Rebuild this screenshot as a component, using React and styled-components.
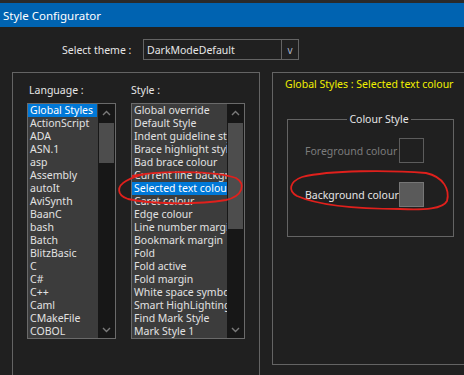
import React from "react";
import styled, { createGlobalStyle } from "styled-components";

const GlobalStyle = createGlobalStyle`
  html, body {
    margin: 0;
    padding: 0;
    width: 464px;
    height: 375px;
    overflow: hidden;
    background: #202020;
  }
  body {
    font-family: "Noto Sans", "Open Sans", sans-serif;
    font-size: 10.5px;
  }
`;

const languages = [
  "Global Styles", "ActionScript", "ADA", "ASN.1", "asp", "Assembly", "autoIt",
  "AviSynth", "BaanC", "bash", "Batch", "BlitzBasic", "C", "C#", "C++", "Caml",
  "CMakeFile", "COBOL"
];

const styles = [
  "Global override", "Default Style", "Indent guideline style", "Brace highlight style",
  "Bad brace colour", "Current line background colour", "Selected text colour",
  "Caret colour", "Edge colour", "Line number margin", "Bookmark margin", "Fold",
  "Fold active", "Fold margin", "White space symbol", "Smart HighLighting",
  "Find Mark Style", "Mark Style 1"
];

const Window = styled.div`
  position: relative;
  width: 464px;
  height: 375px;
  overflow: hidden;
  background: #202020;
`;

const TopStrip = styled.div`
  height: 3px;
  background: #2a2a2a;
`;

const TitleBar = styled.div`
  height: 24px;
  background: #0063b1;
  color: #ffffff;
  font-size: 11.5px;
  display: flex;
  align-items: center;
  padding-left: 3px;
`;

const Body = styled.div`
  padding: 12px 0 0 12px;
`;

const ThemeRow = styled.div`
  display: flex;
  align-items: center;
  height: 21px;
  padding-left: 50px;
`;

const ThemeLabel = styled.span`
  width: 81px;
  color: #e6e6e6;
  white-space: nowrap;
`;

const Label = styled.span`
  color: ${(p) => (p.$dim ? "#7c7c7c" : "#e6e6e6")};
  white-space: nowrap;
`;

const Combo = styled.div`
  display: flex;
  width: 156px;
  height: 21px;
  box-sizing: border-box;
  border: 1px solid #646464;
  color: #e6e6e6;
`;

const ComboText = styled.div`
  flex: 1;
  display: flex;
  align-items: center;
  padding-left: 3px;
`;

const ComboButton = styled.div`
  width: 16px;
  border-left: 1px solid #646464;
  display: flex;
  align-items: center;
  justify-content: center;
  color: #aab4c8;
  font-size: 10px;
`;

const Panels = styled.div`
  display: flex;
  gap: 12px;
  margin-top: 12px;
`;

const GroupBox = styled.div`
  flex: none;
  box-sizing: border-box;
  width: ${(p) => p.$w}px;
  height: ${(p) => p.$h}px;
  border: 1px solid #646464;
  ${(p) => p.$open && "border-bottom: none;"}
`;

const ListsArea = styled.div`
  display: flex;
  gap: 15px;
  padding: 9px 0 0 14px;
`;

const ListColumn = styled.div`
  display: flex;
  flex-direction: column;
  gap: 5px;
`;

const ListLabel = styled.div`
  color: #e6e6e6;
  height: 16px;
  line-height: 16px;
  padding-left: ${(p) => p.$indent || 0}px;
`;

const ListBox = styled.div`
  display: flex;
  width: ${(p) => p.$w}px;
  height: 236px;
  box-sizing: border-box;
  border: 1px solid #6a6a6a;
  background: #3c3c3c;
`;

const Items = styled.div`
  flex: 1;
  overflow: hidden;
`;

const Item = styled.div`
  height: 13px;
  line-height: 13px;
  padding-left: 2px;
  white-space: nowrap;
  overflow: hidden;
  color: ${(p) => (p.$selected ? "#ffffff" : "#e2e2e2")};
  background: ${(p) => (p.$selected ? "#0078d7" : "transparent")};
  width: ${(p) => (p.$fit ? "fit-content" : "auto")};
  padding-right: ${(p) => (p.$fit ? "4px" : "0")};
`;

const ScrollBar = styled.div`
  width: 17px;
  background: #171717;
  display: flex;
  flex-direction: column;
  align-items: center;
`;

const Arrow = styled.div`
  height: 17px;
  display: flex;
  align-items: center;
  justify-content: center;
`;

const Track = styled.div`
  flex: 1;
  width: 15px;
`;

const Thumb = styled.div`
  height: ${(p) => p.$h}px;
  background: #4d4d4d;
`;

const Heading = styled.div`
  color: #f0f000;
  padding: 2px 0 0 12px;
  height: 18px;
  line-height: 18px;
  white-space: nowrap;
`;

const ColourGroup = styled.fieldset`
  margin: 19px 0 0 14px;
  width: 167px;
  height: 125px;
  box-sizing: border-box;
  border: 1px solid #646464;
  padding: 0 0 0 17px;
  legend {
    color: #e6e6e6;
    text-align: center;
    padding: 0 2px;
    margin: 0 auto;
    line-height: 14px;
  }
`;

const ColourRows = styled.div`
  display: flex;
  flex-direction: column;
  gap: 19px;
  padding-top: 12px;
`;

const ColourRow = styled.div`
  display: flex;
  align-items: center;
  justify-content: space-between;
  width: 119px;
  height: 25px;
`;

const Swatch = styled.div`
  flex: none;
  width: 25px;
  height: 25px;
  box-sizing: border-box;
  border: 1px solid ${(p) => (p.$fill ? "#767676" : "#5c5c5c")};
  background: ${(p) => p.$fill || "transparent"};
`;

const Marks = styled.svg`
  position: absolute;
  left: 0;
  top: 0;
  pointer-events: none;
`;

const Chevron = ({ down }) => (
  <svg width="9" height="6" viewBox="0 0 9 6">
    <path
      d={down ? "M1 1 L4.5 4.5 L8 1" : "M1 5 L4.5 1.5 L8 5"}
      fill="none"
      stroke="#7a7a7a"
      strokeWidth="1.4"
    />
  </svg>
);

function List({ items, width, selected, thumbTop, thumbHeight, fitSelected }) {
  return (
    <ListBox $w={width}>
      <Items>
        {items.map((it) => (
          <Item key={it} $selected={it === selected} $fit={fitSelected && it === selected}>
            {it}
          </Item>
        ))}
      </Items>
      <ScrollBar>
        <Arrow><Chevron /></Arrow>
        <Track>
          <div style={{ height: thumbTop }} />
          <Thumb $h={thumbHeight} />
        </Track>
        <Arrow><Chevron down /></Arrow>
      </ScrollBar>
    </ListBox>
  );
}

export default function App() {
  return (
    <Window>
      <GlobalStyle />
      <TopStrip />
      <TitleBar>Style Configurator</TitleBar>
      <Body>
        <ThemeRow>
          <ThemeLabel>Select theme :</ThemeLabel>
          <Combo>
            <ComboText>DarkModeDefault</ComboText>
            <ComboButton>v</ComboButton>
          </Combo>
        </ThemeRow>
        <Panels>
          <GroupBox $w={248} $h={320} $open>
            <ListsArea>
              <ListColumn>
                <ListLabel $indent={2}>Language :</ListLabel>
                <List
                  items={languages}
                  width={89}
                  selected="Global Styles"
                  thumbTop={2}
                  thumbHeight={40}
                  fitSelected
                />
              </ListColumn>
              <ListColumn>
                <ListLabel>Style :</ListLabel>
                <List
                  items={styles}
                  width={114}
                  selected="Selected text colour"
                  thumbTop={2}
                  thumbHeight={106}
                />
              </ListColumn>
            </ListsArea>
          </GroupBox>
          <GroupBox $w={200} $h={293}>
            <Heading>Global Styles : Selected text colour</Heading>
            <ColourGroup>
              <legend>Colour Style</legend>
              <ColourRows>
                <ColourRow>
                  <Label $dim>Foreground colour</Label>
                  <Swatch />
                </ColourRow>
                <ColourRow>
                  <Label>Background colour</Label>
                  <Swatch $fill="#5a5a5a" />
                </ColourRow>
              </ColourRows>
            </ColourGroup>
          </GroupBox>
        </Panels>
      </Body>
      <Marks width="464" height="375" viewBox="0 0 464 375">
        <path
          d="M132 176 C160 170 215 171 236 178 C246 184 243 196 226 200 C195 205 150 204 128 199 C116 195 117 186 126 181 C133 177 140 175 146 174"
          fill="none"
          stroke="#e0201c"
          strokeWidth="1.8"
        />
        <path
          d="M302 177 C330 170 390 170 426 173 C444 177 450 190 447 201 C443 209 425 210 400 209 C360 209 320 206 297 196 C288 191 289 182 302 177"
          fill="none"
          stroke="#e0201c"
          strokeWidth="1.8"
        />
      </Marks>
    </Window>
  );
}
